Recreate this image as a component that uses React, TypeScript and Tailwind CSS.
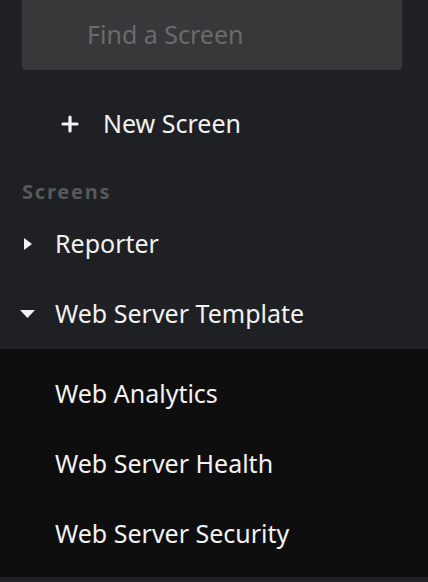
import { Plus } from "lucide-react";

const children = ["Web Analytics", "Web Server Health", "Web Server Security"];

function Caret({ open }: { open: boolean }) {
  return open ? (
    <svg width="15" height="8" viewBox="0 0 15 8" className="ml-[20px] mr-[20px]">
      <path d="M0 0h15L7.5 8z" fill="#f2f2f2" />
    </svg>
  ) : (
    <svg width="8" height="12" viewBox="0 0 8 12" className="ml-[24px] mr-[23px]">
      <path d="M0 0l8 6-8 6z" fill="#f2f2f2" />
    </svg>
  );
}

export default function App() {
  return (
    <div className="flex h-[582px] w-full flex-col overflow-hidden bg-[#1f2023] font-['Noto_Sans',sans-serif] text-[25px] text-[#f2f2f2]">
      <div className="ml-[22px] mr-[26px] flex h-[70px] shrink-0 items-center rounded-b-[4px] bg-[#37383a] pl-[65px] text-[#6a6b6d]">
        Find a Screen
      </div>

      <button className="mt-[19px] flex h-[70px] shrink-0 items-center">
        <Plus className="ml-[58px] size-6" strokeWidth={3.2} />
        <span className="ml-[21px]">New Screen</span>
      </button>

      <div className="mt-[21px] flex h-6 shrink-0 items-center pl-[22px] text-[20px] font-bold tracking-[0.09em] text-[#58595b]">
        Screens
      </div>

      <div className="mt-[5px] flex h-[70px] shrink-0 items-center">
        <Caret open={false} />
        <span>Reporter</span>
      </div>
      <div className="flex h-[70px] shrink-0 items-center">
        <Caret open />
        <span>Web Server Template</span>
      </div>

      <div className="flex h-[228px] shrink-0 flex-col bg-[#0e0e0f] pt-[10px] pb-2">
        {children.map((name) => (
          <div key={name} className="flex h-[70px] items-center pl-[55px]">
            {name}
          </div>
        ))}
      </div>
    </div>
  );
}
